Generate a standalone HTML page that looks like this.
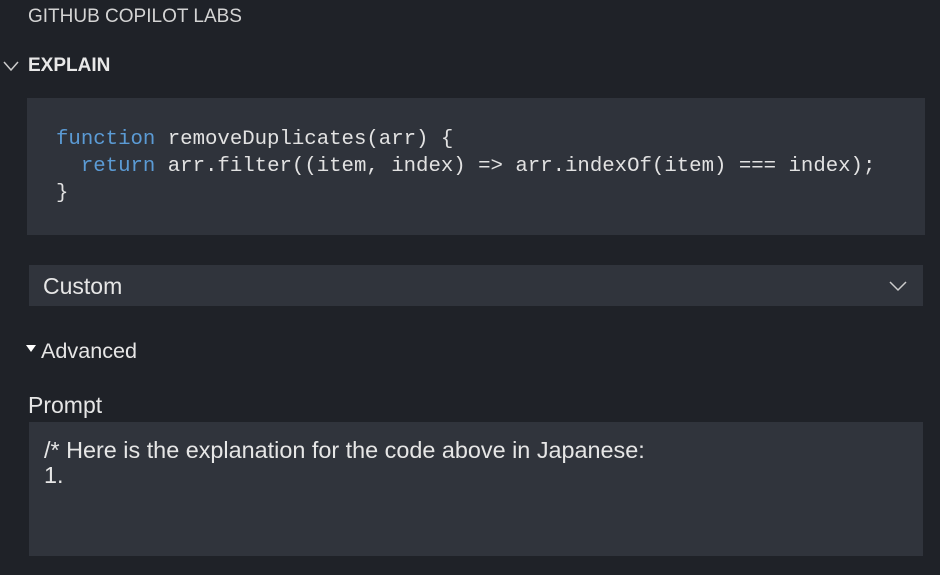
<!DOCTYPE html>
<html><head><meta charset="utf-8"><style>
body{margin:0;width:940px;height:575px;background:#1f2228;font-family:"Liberation Sans",sans-serif;color:#e6e6e6;position:relative;overflow:hidden}
.a{position:absolute}
.code{left:27px;top:98px;width:898px;height:137px;background:#2f333b}
pre{margin:0;position:absolute;left:29px;top:28px;font-family:"Liberation Mono",monospace;font-size:20.7px;line-height:27px;color:#e2e2e2}
.k{color:#5b9bd5}
.box{background:#30343c}
</style></head><body>
<div class="a" style="left:28px;top:6px;font-size:19px;color:#d4d4d4">GITHUB COPILOT LABS</div>
<svg class="a" style="left:3px;top:60px" width="16" height="12"><path d="M1 2 L8 10 L15 2" fill="none" stroke="#ccc" stroke-width="1.5"/></svg>
<div class="a" style="left:28px;top:55px;font-size:19px;font-weight:bold;color:#e8e8e8">EXPLAIN</div>
<div class="a code"><pre><span class="k">function</span> removeDuplicates(arr) {
  <span class="k">return</span> arr.filter((item, index) =&gt; arr.indexOf(item) === index);
}</pre></div>
<div class="a box" style="left:29px;top:265px;width:894px;height:41px"></div>
<div class="a" style="left:43px;top:273px;font-size:23px;color:#e6e6e6">Custom</div>
<svg class="a" style="left:889px;top:280px" width="18" height="12"><path d="M1 2 L9 10 L17 2" fill="none" stroke="#ccc" stroke-width="1.5"/></svg>
<svg class="a" style="left:26px;top:345px" width="10" height="8"><path d="M0 0 L10 0 L5 7Z" fill="#fff"/></svg>
<div class="a" style="left:41px;top:338px;font-size:21.6px">Advanced</div>
<div class="a" style="left:28px;top:392px;font-size:23px">Prompt</div>
<div class="a box" style="left:29px;top:422px;width:894px;height:134px"></div>
<div class="a" style="left:44px;top:438px;font-size:23.4px;line-height:25px">/* Here is the explanation for the code above in Japanese:<br>1.</div>
</body></html>
